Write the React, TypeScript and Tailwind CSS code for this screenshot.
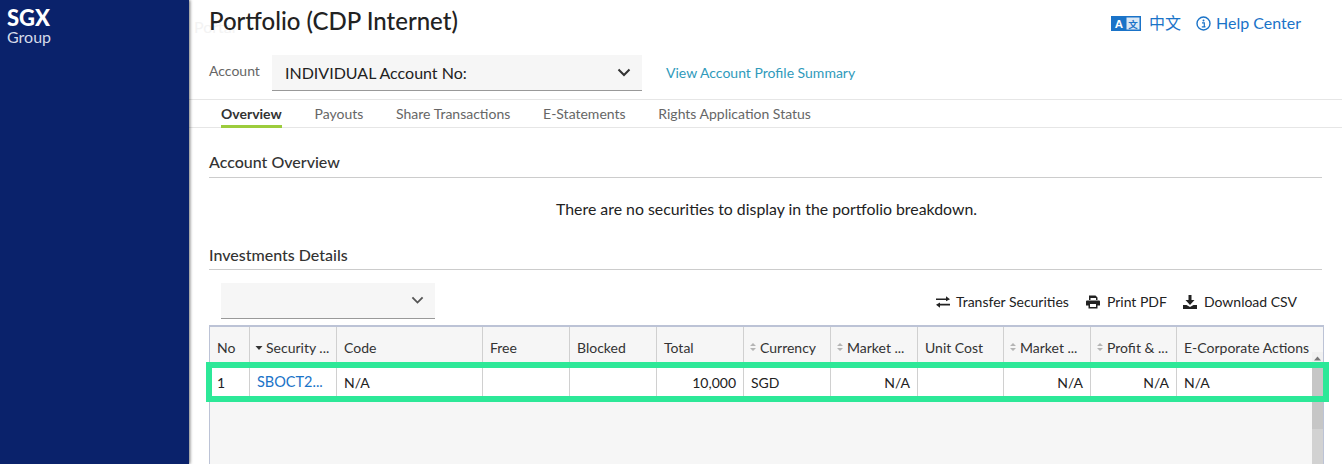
import React from "react";

const cols = ["w-[40px]", "w-[87px]", "w-[146px]", "w-[87px]", "w-[87px]", "w-[87px]", "w-[87px]", "w-[87px]", "w-[86px]", "w-[87px]", "w-[86px]", "flex-1"];

function Sort() {
  return (
    <svg width="8" height="10" viewBox="0 0 8 10" className="mr-[3px] shrink-0">
      <path d="M4 1 L7 4 H1 Z M4 9 L1 6 H7 Z" fill="#b5b5b5" />
    </svg>
  );
}

function Desc() {
  return (
    <svg width="8" height="10" viewBox="0 0 8 10" className="mr-[3px] shrink-0">
      <path d="M0.5 4 H7.5 L4 8 Z" fill="#333" />
    </svg>
  );
}

const headers: { t: string; i?: "s" | "d" }[] = [
  { t: "No" },
  { t: "Security ...", i: "d" },
  { t: "Code" },
  { t: "Free" },
  { t: "Blocked" },
  { t: "Total" },
  { t: "Currency", i: "s" },
  { t: "Market ...", i: "s" },
  { t: "Unit Cost" },
  { t: "Market ...", i: "s" },
  { t: "Profit & ...", i: "s" },
  { t: "E-Corporate Actions" },
];

const cells: { t: string; r?: boolean; link?: boolean }[] = [
  { t: "1" },
  { t: "SBOCT2...", link: true },
  { t: "N/A" },
  { t: "" },
  { t: "" },
  { t: "10,000", r: true },
  { t: "SGD" },
  { t: "N/A", r: true },
  { t: "" },
  { t: "N/A", r: true },
  { t: "N/A", r: true },
  { t: "N/A" },
];

function Chevron({ size = 14, color = "#333" }: { size?: number; color?: string }) {
  return (
    <svg width={size} height={size * 0.65} viewBox="0 0 14 9" fill="none">
      <path d="M1.5 1.5 L7 7 L12.5 1.5" stroke={color} strokeWidth="2" />
    </svg>
  );
}

export default function App() {
  return (
    <div className="flex h-[464px] w-[1342px] overflow-hidden bg-white font-['Lato','Noto_Sans_CJK_SC',sans-serif] text-[#222]">
      <aside className="z-10 w-[189px] shrink-0 bg-[#0a226b] pl-[7px] pt-[8px] text-white shadow-[1px_0_3px_rgba(0,0,0,0.55)]">
        <div className="text-[22px] font-black leading-[20px]">SGX</div>
        <div className="text-[16px] leading-[18px] text-[#d5dbe9]">Group</div>
      </aside>

      <main className="relative min-w-0 flex-1">
        <span className="absolute left-[5px] top-[18px] text-[16px] leading-[18px] text-[#f3f3f3]">Portal</span>

        <header className="relative flex h-[47px] items-start justify-between pl-[20px] pr-[41px]">
          <h1 className="pt-[6px] text-[24px] font-medium leading-[30px] text-[#222]">Portfolio (CDP Internet)</h1>
          <div className="flex items-center pt-[13px] text-[16px] leading-[20px] text-[#1a73c8]">
            <svg width="30" height="15" viewBox="0 0 30 15" className="mr-[8px]">
              <rect width="30" height="15" fill="#1a73c8" />
              <rect x="15.5" y="1.5" width="13" height="12" fill="#dbe8f5" />
              <text x="7.8" y="12" textAnchor="middle" fontSize="11.5" fontWeight="700" fill="#fff" fontFamily="Liberation Sans">A</text>
              <text x="22" y="11.5" textAnchor="middle" fontSize="9.5" fontWeight="700" fill="#1a73c8" fontFamily="Noto Sans CJK SC">文</text>
            </svg>
            <span className="mr-[15px]">中文</span>
            <svg width="15" height="15" viewBox="0 0 15 15" fill="none" className="mr-[5px]">
              <circle cx="7.5" cy="7.5" r="6.5" stroke="#1a73c8" strokeWidth="1.4" />
              <circle cx="7.5" cy="4.5" r="1" fill="#1a73c8" />
              <path d="M6 6.8 H8.3 V10.6 H9.4 M5.8 10.8 H9.4" stroke="#1a73c8" strokeWidth="1.2" />
            </svg>
            <span>Help Center</span>
          </div>
        </header>

        <div className="flex h-[52px] items-start pl-[20px]">
          <span className="mt-[15px] w-[63px] text-[14px] leading-[18px] text-[#666]">Account</span>
          <div className="mt-[8px] flex h-[36px] w-[370px] items-center justify-between border-b border-[#999] bg-[#f6f6f6] pl-[13px] pr-[11px]">
            <span className="text-[16px] text-[#222]">INDIVIDUAL Account No:</span>
            <Chevron />
          </div>
          <a className="ml-[24px] mt-[17px] text-[14px] leading-[18px] text-[#2f9abb]">View Account Profile Summary</a>
        </div>

        <nav className="flex h-[29px] items-start gap-[32.75px] border-y border-[#e6e6e6] pl-[32px] pt-[5px] text-[14px] leading-[18px] text-[#666]">
          <span className="h-[23px] shrink-0 border-b-[3px] border-[#9ccc3c] font-bold text-[#333]">Overview</span>
          <span>Payouts</span>
          <span>Share Transactions</span>
          <span>E-Statements</span>
          <span>Rights Application Status</span>
        </nav>

        <section className="mx-[20px] mt-[24px]">
          <h2 className="border-b border-[#ccc] pb-[5px] text-[16px] font-medium leading-[20px] text-[#333]">Account Overview</h2>
          <p className="pl-[2px] pt-[21px] text-center text-[15.85px] leading-[20px] text-[#222]">There are no securities to display in the portfolio breakdown.</p>
        </section>

        <section className="mx-[20px] mt-[26px]">
          <h2 className="border-b border-[#ccc] pb-[4px] text-[16px] font-medium leading-[20px] text-[#333]">Investments Details</h2>
        </section>

        <div className="ml-[20px] mr-[45px] mt-[13px] flex h-[36px] items-center justify-between pl-[12px]">
          <div className="flex h-[36px] w-[214px] items-center justify-end border-b border-[#999] bg-[#f6f6f6] pr-[11px]">
            <Chevron size={13} color="#555" />
          </div>
          <div className="mt-[2px] flex items-center text-[14px] leading-[18px] text-[#222]">
            <svg width="14" height="12" viewBox="0 0 14 12" className="mr-[6px]">
              <path d="M0 2.4 H10 V0.3 L14 3.3 L10 5.2 V4 H0 Z M14 7.8 H4 V6.6 L0 8.8 L4 11.7 V9.4 H14 Z" fill="#222" />
            </svg>
            <span className="mr-[17px]">Transfer Securities</span>
            <svg width="14" height="14" viewBox="0 0 14 14" className="mr-[7px]">
              <path d="M3 0.5 H9.5 L11.5 2.5 V5 H10 V3 H4.5 V5 H3 Z M1 5.5 H13 A1 1 0 0 1 14 6.5 V10.5 H11.5 V13.5 H2.5 V10.5 H0 V6.5 A1 1 0 0 1 1 5.5 Z M4 9 V12 H10 V9 Z" fill="#222" fillRule="evenodd" />
            </svg>
            <span className="mr-[16px]">Print PDF</span>
            <svg width="14" height="14" viewBox="0 0 14 14" className="mr-[7px]">
              <path d="M5.5 0 H8.5 V5 H11.5 L7 10 L2.5 5 H5.5 Z M0 10 H3.5 L7 12 L10.5 10 H14 V14 H0 Z" fill="#222" />
            </svg>
            <span>Download CSV</span>
          </div>
        </div>

        <div className="relative ml-[20px] mr-[18px] mt-[6px] h-[140px] border-l border-r border-t-2 border-[#bcc3d6] bg-[#f6f6f6]">
          <div className="flex h-[40px] text-[14px] text-[#333]">
            {headers.map((h, i) => (
              <div
                key={i}
                className={`${cols[i]} flex shrink-0 items-center whitespace-nowrap border-r border-[#d0d0d0] last:border-r-0 ${h.i ? "pl-[5px]" : "pl-[7px]"}`}
              >
                {h.i === "s" && <Sort />}
                {h.i === "d" && <Desc />}
                {h.t}
              </div>
            ))}
          </div>
          <div className="flex h-[30px] bg-white text-[14px] text-[#222]">
            {cells.map((c, i) => (
              <div
                key={i}
                className={`${cols[i]} flex shrink-0 items-center border-r border-[#d0d0d0] last:border-r-0 ${c.r ? "justify-end pr-[7px]" : "pl-[7px]"} ${c.link ? "text-[14.5px] text-[#1a73c8]" : ""}`}
              >
                {c.t}
              </div>
            ))}
          </div>
          <div className="absolute bottom-0 right-0 top-[25px] flex w-[11px] flex-col items-center bg-[#d2d2d2]">
            <div className="flex h-[12px] w-full items-center justify-center bg-[#f0f0f0]">
              <svg width="7" height="5" viewBox="0 0 7 5"><path d="M3.5 0.5 L7 4.5 H0 Z" fill="#777" /></svg>
            </div>
            <div className="h-[65px] w-full bg-[#c6c6c6]" />
          </div>
          <div className="absolute -left-[4px] right-[-6px] top-[35px] h-[40px] border-[6px] border-[#2de898]" />
        </div>
      </main>
    </div>
  );
}
